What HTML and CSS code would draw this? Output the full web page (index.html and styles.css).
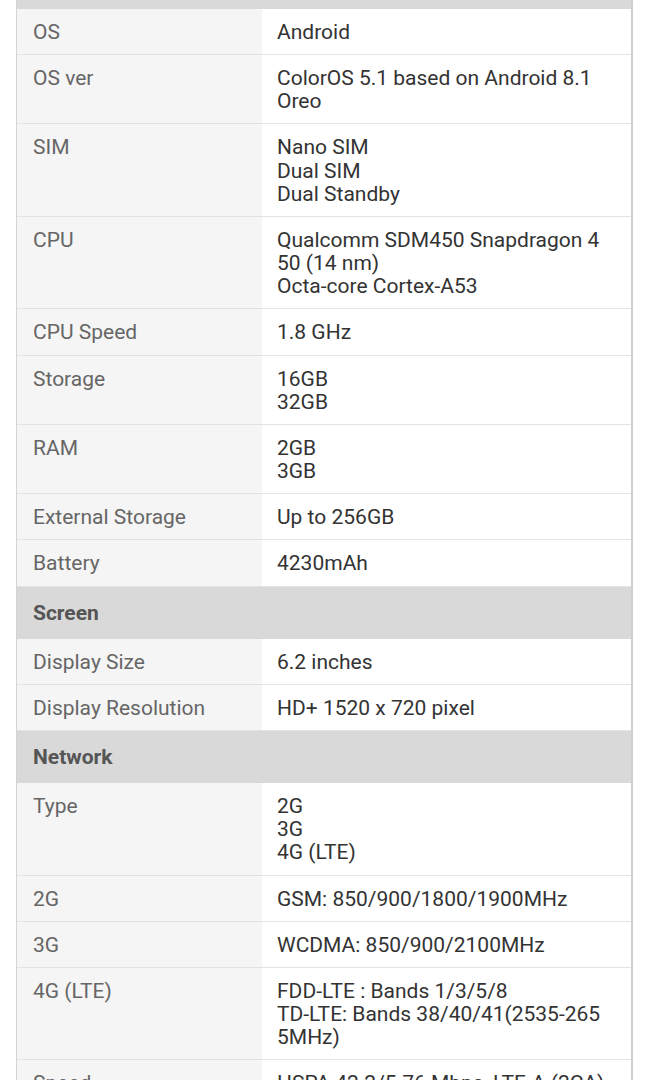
FILE: index.html
```html
<!DOCTYPE html>
<html>
<head>
<meta charset="utf-8">
<link rel="stylesheet" href="styles.css">
</head>
<body>
<div class="specs">
  <div class="section-tail"></div>
  <div class="row"><div class="label">OS</div><div class="value">Android</div></div>
  <div class="row"><div class="label">OS ver</div><div class="value">ColorOS 5.1 based on Android 8.1 Oreo</div></div>
  <div class="row"><div class="label">SIM</div><div class="value">Nano SIM<br>Dual SIM<br>Dual Standby</div></div>
  <div class="row"><div class="label">CPU</div><div class="value">Qualcomm SDM450 Snapdragon 450 (14 nm)<br>Octa-core Cortex-A53</div></div>
  <div class="row"><div class="label">CPU Speed</div><div class="value">1.8 GHz</div></div>
  <div class="row"><div class="label">Storage</div><div class="value">16GB<br>32GB</div></div>
  <div class="row"><div class="label">RAM</div><div class="value">2GB<br>3GB</div></div>
  <div class="row"><div class="label">External Storage</div><div class="value">Up to 256GB</div></div>
  <div class="row"><div class="label">Battery</div><div class="value">4230mAh</div></div>
  <div class="section">Screen</div>
  <div class="row"><div class="label">Display Size</div><div class="value">6.2 inches</div></div>
  <div class="row"><div class="label">Display Resolution</div><div class="value">HD+ 1520 x 720 pixel</div></div>
  <div class="section">Network</div>
  <div class="row"><div class="label">Type</div><div class="value">2G<br>3G<br>4G (LTE)</div></div>
  <div class="row"><div class="label">2G</div><div class="value">GSM: 850/900/1800/1900MHz</div></div>
  <div class="row"><div class="label">3G</div><div class="value">WCDMA: 850/900/2100MHz</div></div>
  <div class="row"><div class="label">4G (LTE)</div><div class="value">FDD-LTE : Bands 1/3/5/8<br>TD-LTE: Bands 38/40/41(2535-2655MHz)</div></div>
  <div class="row"><div class="label">Speed</div><div class="value">HSPA 42.2/5.76 Mbps, LTE-A (2CA)</div></div>
</div>
</body>
</html>
```

FILE: styles.css
```css
html, body {
  margin: 0;
  padding: 0;
  background: #ffffff;
}
body {
  font-family: Roboto, "Noto Sans", sans-serif;
  font-size: 21px;
  line-height: 23.15px;
  overflow: hidden;
}
.specs {
  margin-left: 16px;
  width: 614px;
  border-left: 1px solid #d4d4d4;
  border-right: 2px solid #cfcfcf;
}
.section-tail {
  height: 9px;
  background: #d9d9d9;
}
.section {
  background: #d9d9d9;
  color: #555555;
  font-weight: bold;
  padding: 15px 16px 14px;
}
.row {
  display: grid;
  grid-template-columns: 245px 1fr;
  border-bottom: 1px solid #e3e3e3;
}
.label {
  background: #f5f5f5;
  color: #666666;
  padding: 12px 16px 10px;
}
.value {
  background: #ffffff;
  color: #333333;
  padding: 12px 25px 10px 15px;
  word-break: break-all;
}
```
